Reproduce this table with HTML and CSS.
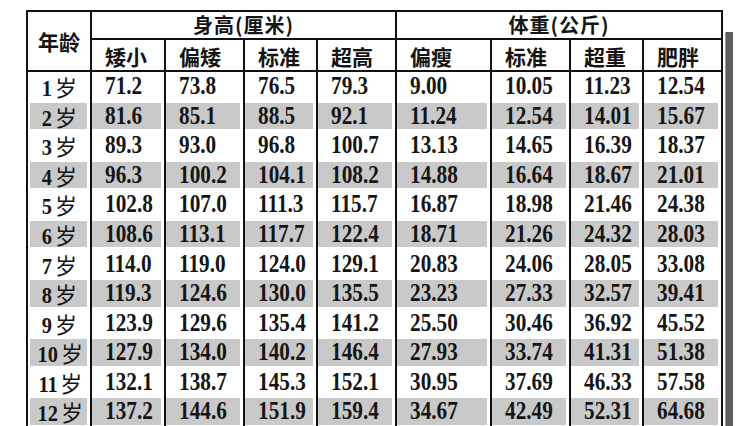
FILE: index.html
```html
<!DOCTYPE html>
<html lang="zh">
<head>
<meta charset="utf-8">
<title>儿童身高体重标准表</title>
<link rel="stylesheet" href="styles.css">
</head>
<body>
<div class="page">
  <table class="chart">
    <colgroup>
      <col class="w-age"><col class="w-a"><col class="w-b"><col class="w-c"><col class="w-d">
      <col class="w-e"><col class="w-f"><col class="w-g"><col class="w-h">
    </colgroup>
    <thead>
      <tr class="h1">
        <th rowspan="2" class="age-head">年龄</th>
        <th colspan="4" class="group">身高(厘米)</th>
        <th colspan="4" class="group">体重(公斤)</th>
      </tr>
      <tr class="h2">
        <th>矮小</th><th>偏矮</th><th>标准</th><th>超高</th>
        <th>偏瘦</th><th>标准</th><th>超重</th><th>肥胖</th>
      </tr>
    </thead>
    <tbody>
      <tr><td class="age"><div class="c"><span class="n">1</span><span class="sui">岁</span></div></td><td><div class="c"><span class="n">71.2</span></div></td><td><div class="c"><span class="n">73.8</span></div></td><td><div class="c"><span class="n">76.5</span></div></td><td><div class="c"><span class="n">79.3</span></div></td><td><div class="c"><span class="n">9.00</span></div></td><td><div class="c"><span class="n">10.05</span></div></td><td><div class="c"><span class="n">11.23</span></div></td><td><div class="c"><span class="n">12.54</span></div></td></tr>
      <tr class="alt"><td class="age"><div class="c"><span class="n">2</span><span class="sui">岁</span></div></td><td><div class="c"><span class="n">81.6</span></div></td><td><div class="c"><span class="n">85.1</span></div></td><td><div class="c"><span class="n">88.5</span></div></td><td><div class="c"><span class="n">92.1</span></div></td><td><div class="c"><span class="n">11.24</span></div></td><td><div class="c"><span class="n">12.54</span></div></td><td><div class="c"><span class="n">14.01</span></div></td><td><div class="c"><span class="n">15.67</span></div></td></tr>
      <tr><td class="age"><div class="c"><span class="n">3</span><span class="sui">岁</span></div></td><td><div class="c"><span class="n">89.3</span></div></td><td><div class="c"><span class="n">93.0</span></div></td><td><div class="c"><span class="n">96.8</span></div></td><td><div class="c"><span class="n">100.7</span></div></td><td><div class="c"><span class="n">13.13</span></div></td><td><div class="c"><span class="n">14.65</span></div></td><td><div class="c"><span class="n">16.39</span></div></td><td><div class="c"><span class="n">18.37</span></div></td></tr>
      <tr class="alt"><td class="age"><div class="c"><span class="n">4</span><span class="sui">岁</span></div></td><td><div class="c"><span class="n">96.3</span></div></td><td><div class="c"><span class="n">100.2</span></div></td><td><div class="c"><span class="n">104.1</span></div></td><td><div class="c"><span class="n">108.2</span></div></td><td><div class="c"><span class="n">14.88</span></div></td><td><div class="c"><span class="n">16.64</span></div></td><td><div class="c"><span class="n">18.67</span></div></td><td><div class="c"><span class="n">21.01</span></div></td></tr>
      <tr><td class="age"><div class="c"><span class="n">5</span><span class="sui">岁</span></div></td><td><div class="c"><span class="n">102.8</span></div></td><td><div class="c"><span class="n">107.0</span></div></td><td><div class="c"><span class="n">111.3</span></div></td><td><div class="c"><span class="n">115.7</span></div></td><td><div class="c"><span class="n">16.87</span></div></td><td><div class="c"><span class="n">18.98</span></div></td><td><div class="c"><span class="n">21.46</span></div></td><td><div class="c"><span class="n">24.38</span></div></td></tr>
      <tr class="alt"><td class="age"><div class="c"><span class="n">6</span><span class="sui">岁</span></div></td><td><div class="c"><span class="n">108.6</span></div></td><td><div class="c"><span class="n">113.1</span></div></td><td><div class="c"><span class="n">117.7</span></div></td><td><div class="c"><span class="n">122.4</span></div></td><td><div class="c"><span class="n">18.71</span></div></td><td><div class="c"><span class="n">21.26</span></div></td><td><div class="c"><span class="n">24.32</span></div></td><td><div class="c"><span class="n">28.03</span></div></td></tr>
      <tr><td class="age"><div class="c"><span class="n">7</span><span class="sui">岁</span></div></td><td><div class="c"><span class="n">114.0</span></div></td><td><div class="c"><span class="n">119.0</span></div></td><td><div class="c"><span class="n">124.0</span></div></td><td><div class="c"><span class="n">129.1</span></div></td><td><div class="c"><span class="n">20.83</span></div></td><td><div class="c"><span class="n">24.06</span></div></td><td><div class="c"><span class="n">28.05</span></div></td><td><div class="c"><span class="n">33.08</span></div></td></tr>
      <tr class="alt"><td class="age"><div class="c"><span class="n">8</span><span class="sui">岁</span></div></td><td><div class="c"><span class="n">119.3</span></div></td><td><div class="c"><span class="n">124.6</span></div></td><td><div class="c"><span class="n">130.0</span></div></td><td><div class="c"><span class="n">135.5</span></div></td><td><div class="c"><span class="n">23.23</span></div></td><td><div class="c"><span class="n">27.33</span></div></td><td><div class="c"><span class="n">32.57</span></div></td><td><div class="c"><span class="n">39.41</span></div></td></tr>
      <tr><td class="age"><div class="c"><span class="n">9</span><span class="sui">岁</span></div></td><td><div class="c"><span class="n">123.9</span></div></td><td><div class="c"><span class="n">129.6</span></div></td><td><div class="c"><span class="n">135.4</span></div></td><td><div class="c"><span class="n">141.2</span></div></td><td><div class="c"><span class="n">25.50</span></div></td><td><div class="c"><span class="n">30.46</span></div></td><td><div class="c"><span class="n">36.92</span></div></td><td><div class="c"><span class="n">45.52</span></div></td></tr>
      <tr class="alt"><td class="age"><div class="c"><span class="n">10</span><span class="sui">岁</span></div></td><td><div class="c"><span class="n">127.9</span></div></td><td><div class="c"><span class="n">134.0</span></div></td><td><div class="c"><span class="n">140.2</span></div></td><td><div class="c"><span class="n">146.4</span></div></td><td><div class="c"><span class="n">27.93</span></div></td><td><div class="c"><span class="n">33.74</span></div></td><td><div class="c"><span class="n">41.31</span></div></td><td><div class="c"><span class="n">51.38</span></div></td></tr>
      <tr><td class="age"><div class="c"><span class="n">11</span><span class="sui">岁</span></div></td><td><div class="c"><span class="n">132.1</span></div></td><td><div class="c"><span class="n">138.7</span></div></td><td><div class="c"><span class="n">145.3</span></div></td><td><div class="c"><span class="n">152.1</span></div></td><td><div class="c"><span class="n">30.95</span></div></td><td><div class="c"><span class="n">37.69</span></div></td><td><div class="c"><span class="n">46.33</span></div></td><td><div class="c"><span class="n">57.58</span></div></td></tr>
      <tr class="alt"><td class="age"><div class="c"><span class="n">12</span><span class="sui">岁</span></div></td><td><div class="c"><span class="n">137.2</span></div></td><td><div class="c"><span class="n">144.6</span></div></td><td><div class="c"><span class="n">151.9</span></div></td><td><div class="c"><span class="n">159.4</span></div></td><td><div class="c"><span class="n">34.67</span></div></td><td><div class="c"><span class="n">42.49</span></div></td><td><div class="c"><span class="n">52.31</span></div></td><td><div class="c"><span class="n">64.68</span></div></td></tr>
    </tbody>
  </table>
  <div class="edge"></div>
</div>
</body>
</html>
```

FILE: styles.css
```css
html, body {
  margin: 0;
  padding: 0;
  background: #ffffff;
  overflow: hidden;
  height: 426px;
}

.page {
  display: flex;
  align-items: flex-start;
  padding: 10px 0 0 26px;
}

.chart {
  border-collapse: collapse;
  table-layout: fixed;
  width: 697px;
  border: 2px solid #111;
  color: #151515;
}

.w-age { width: 64px; }
.w-a { width: 74px; }
.w-b { width: 79px; }
.w-c { width: 73px; }
.w-d { width: 79px; }
.w-e { width: 95px; }
.w-f { width: 79px; }
.w-g { width: 73px; }
.w-h { width: 79px; }

.chart th, .chart td {
  border-left: 2px solid #111;
  border-right: 2px solid #111;
  padding: 0;
}

.chart th {
  font-family: "Noto Sans CJK SC", "Noto Sans", sans-serif;
  font-weight: 700;
  border-bottom: 2px solid #111;
  white-space: nowrap;
}

.h1 { height: 28px; }
.h2 { height: 32px; }

.group {
  font-size: 20px;
  line-height: 24px;
  text-align: center;
  letter-spacing: 1px;
}

.age-head {
  font-size: 21px;
  text-align: center;
  padding-top: 8px;
}

.h2 th {
  font-size: 21px;
  line-height: 28px;
  text-align: left;
  padding-left: 13px;
  padding-top: 2px;
}

.chart tbody tr {
  height: 29.6px;
}

.c {
  height: 26.5px;
  line-height: 26.5px;
  margin: 1px 3px 2px 0;
  padding-left: 13px;
  white-space: nowrap;
}

.alt .c {
  background: #c9c9c9;
}

.n {
  display: inline-block;
  font-family: "Liberation Serif", "Times New Roman", serif;
  font-weight: 700;
  font-size: 25px;
  transform: scaleX(0.85);
  transform-origin: left center;
}

.age .c {
  padding-left: 0;
  margin-left: 2px;
  display: flex;
  justify-content: center;
  align-items: baseline;
}

.age .n {
  font-size: 24px;
  transform-origin: right center;
  margin-right: 3px;
}

.sui {
  font-family: "Noto Sans CJK SC", sans-serif;
  font-weight: 400;
  font-size: 22px;
}

.edge {
  width: 7px;
  height: 410px;
  margin-top: 22px;
  margin-left: 2px;
  background: #5e5e5e;
  border-left: 1px solid #9a9a9a;
}
```
